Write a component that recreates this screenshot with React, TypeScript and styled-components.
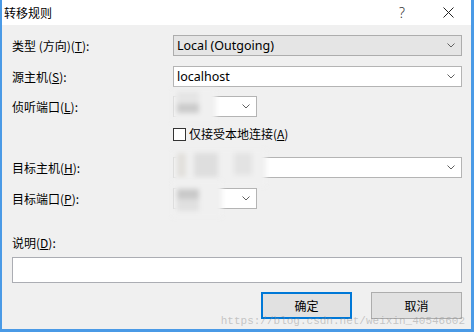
import * as React from 'react';
import styled, {createGlobalStyle} from 'styled-components';

const GlobalStyle = createGlobalStyle`
  html, body {
    margin: 0;
    padding: 0;
    background: #ffffff;
  }
  body {
    font-family: "Noto Sans", "Noto Sans CJK SC", sans-serif;
    font-size: 12px;
    color: #000;
  }
`;

const Chevron: React.FC = () => (
  <svg width="8" height="5" viewBox="0 0 8 5">
    <polyline points="0.5,0.5 4,4 7.5,0.5" fill="none" stroke="#606060" strokeWidth="1" />
  </svg>
);

interface IBlock {
  x: number;
  y: number;
  w: number;
  h: number;
  c: string;
}

interface IMosaicProps {
  left: number;
  top: number;
  width: number;
  height: number;
  blocks: IBlock[];
}

const Mosaic: React.FC<IMosaicProps> = ({left, top, width, height, blocks}) => (
  <MosaicBox style={{left, top, width, height}}>
    {blocks.map((b, i) => (
      <MosaicTile key={i} style={{left: b.x, top: b.y, width: b.w, height: b.h, background: b.c}} />
    ))}
  </MosaicBox>
);

interface IComboProps {
  value?: string;
  readOnly?: boolean;
  width?: number;
  children?: React.ReactNode;
}

const Combo: React.FC<IComboProps> = ({value, readOnly, width, children}) => (
  <ComboBox $readOnly={readOnly} $width={width}>
    <ComboText>{value}</ComboText>
    <Chevron />
    {children}
  </ComboBox>
);

export default function App() {
  return (
    <>
      <GlobalStyle />
      <Window>
        <TitleBar>
          <Title>转移规则</Title>
          <HelpButton>?</HelpButton>
          <CloseButton>
            <svg width="11" height="11" viewBox="0 0 11 11">
              <path d="M0.5 0.5 L10.5 10.5 M10.5 0.5 L0.5 10.5" stroke="#222" strokeWidth="1" />
            </svg>
          </CloseButton>
        </TitleBar>
        <Body>
          <FieldRow $top={10}>
            <Label>类型 (方向)(<u>T</u>):</Label>
            <Combo value="Local (Outgoing)" readOnly />
          </FieldRow>
          <FieldRow $top={10}>
            <Label>源主机(<u>S</u>):</Label>
            <Combo value="localhost" />
          </FieldRow>
          <FieldRow $top={9}>
            <Label>侦听端口(<u>L</u>):</Label>
            <Combo width={84}>
              <Mosaic
                left={-2}
                top={-8}
                width={44}
                height={34}
                blocks={[
                  {x: 5, y: 3, w: 22, h: 9, c: '#e4e4e4'},
                  {x: 5, y: 14, w: 22, h: 10, c: '#cbcbcb'},
                ]}
              />
            </Combo>
          </FieldRow>
          <FieldRow $top={8} $height={18}>
            <span />
            <CheckLine>
              <CheckBox />
              <span>仅接受本地连接(<u>A</u>)</span>
            </CheckLine>
          </FieldRow>
          <FieldRow $top={14}>
            <Label>目标主机(<u>H</u>):</Label>
            <Combo>
              <Mosaic
                left={-2}
                top={-8}
                width={94}
                height={36}
                blocks={[
                  {x: 5, y: 3, w: 9, h: 24, c: '#e2e0dc'},
                  {x: 22, y: 3, w: 24, h: 24, c: '#dedede'},
                  {x: 62, y: 3, w: 18, h: 22, c: '#e3e3e3'},
                ]}
              />
            </Combo>
          </FieldRow>
          <FieldRow $top={10}>
            <Label>目标端口(<u>P</u>):</Label>
            <Combo width={84}>
              <Mosaic
                left={-2}
                top={-8}
                width={50}
                height={36}
                blocks={[
                  {x: 5, y: 8, w: 22, h: 10, c: '#c9c9c9'},
                  {x: 5, y: 18, w: 22, h: 12, c: '#e0e0e0'},
                ]}
              />
            </Combo>
          </FieldRow>
          <DescLabel>说明(<u>D</u>):</DescLabel>
          <DescInput />
          <ButtonRow>
            <DialogButton $primary>确定</DialogButton>
            <DialogButton>取消</DialogButton>
          </ButtonRow>
        </Body>
        <Watermark>https://blog.csdn.net/weixin_40546602</Watermark>
      </Window>
    </>
  );
}

const Window = styled.div`
  position: relative;
  box-sizing: border-box;
  width: 474px;
  height: 332px;
  display: flex;
  flex-direction: column;
  background: #f0f0f0;
  border-left: 2px solid #4a9ae6;
  border-right: 3px solid #4a9ae6;
  border-bottom: 3px solid #4a9ae6;
  overflow: hidden;
`;

const TitleBar = styled.div`
  height: 25px;
  flex: none;
  display: flex;
  align-items: center;
  background: #ffffff;
  padding-left: 2px;
`;

const Title = styled.span`
  flex: 1;
  font-size: 12px;
  line-height: 25px;
  font-family: "Noto Sans CJK SC", sans-serif;
`;

const HelpButton = styled.span`
  width: 46px;
  text-align: center;
  font-size: 14px;
  font-weight: 300;
  color: #333;
  padding-left: 4px;
`;

const CloseButton = styled.span`
  width: 46px;
  display: flex;
  justify-content: center;
  align-items: center;
`;

const Body = styled.div`
  display: flex;
  flex-direction: column;
  padding: 0 9px 0 10px;
`;

const FieldRow = styled.div<{$top: number; $height?: number}>`
  display: grid;
  grid-template-columns: 161px 1fr;
  align-items: center;
  margin-top: ${p => p.$top}px;
  height: ${p => p.$height ?? 21}px;
`;

const Label = styled.span`
  font-family: "Noto Sans CJK SC", sans-serif;
  font-size: 12px;
  line-height: 16px;
  white-space: nowrap;
`;

const ComboBox = styled.div<{$readOnly?: boolean; $width?: number}>`
  position: relative;
  box-sizing: border-box;
  height: 21px;
  width: ${p => (p.$width ? `${p.$width}px` : '100%')};
  display: flex;
  align-items: center;
  padding: 0 6px 0 3px;
  background: ${p => (p.$readOnly ? '#e5e5e5' : '#ffffff')};
  border: 1px solid ${p => (p.$readOnly ? '#adadad' : '#b4b4b4')};
`;

const ComboText = styled.span`
  flex: 1;
  font-size: 12.5px;
  line-height: 19px;
  white-space: nowrap;
`;

const MosaicBox = styled.div`
  position: absolute;
  background: #f0f0f0;
  filter: blur(2.5px);
`;

const MosaicTile = styled.div`
  position: absolute;
`;

const CheckLine = styled.label`
  display: flex;
  align-items: center;
  gap: 3px;
  font-family: "Noto Sans CJK SC", sans-serif;
  font-size: 12px;
  line-height: 16px;
  white-space: nowrap;
`;

const CheckBox = styled.span`
  box-sizing: border-box;
  width: 13px;
  height: 13px;
  border: 1px solid #333;
  background: #fff;
`;

const DescLabel = styled.span`
  margin-top: 26px;
  height: 16px;
  font-family: "Noto Sans CJK SC", sans-serif;
  font-size: 12px;
  line-height: 16px;
`;

const DescInput = styled.div`
  box-sizing: border-box;
  margin-top: 6px;
  height: 26px;
  background: #fff;
  border: 1px solid #abadb3;
`;

const ButtonRow = styled.div`
  display: flex;
  justify-content: flex-end;
  gap: 19px;
  margin-top: 9px;
`;

const DialogButton = styled.div<{$primary?: boolean}>`
  box-sizing: border-box;
  width: 91px;
  height: 27px;
  display: flex;
  align-items: center;
  justify-content: center;
  background: #e1e1e1;
  border: ${p => (p.$primary ? '2px solid #0078d7' : '1px solid #adadad')};
  font-family: "Noto Sans CJK SC", sans-serif;
  font-size: 12px;
`;

const Watermark = styled.span`
  position: absolute;
  right: 6px;
  bottom: 2px;
  font-family: "Liberation Mono", monospace;
  font-size: 11px;
  line-height: 12px;
  color: rgba(140, 140, 140, 0.45);
  pointer-events: none;
`;
